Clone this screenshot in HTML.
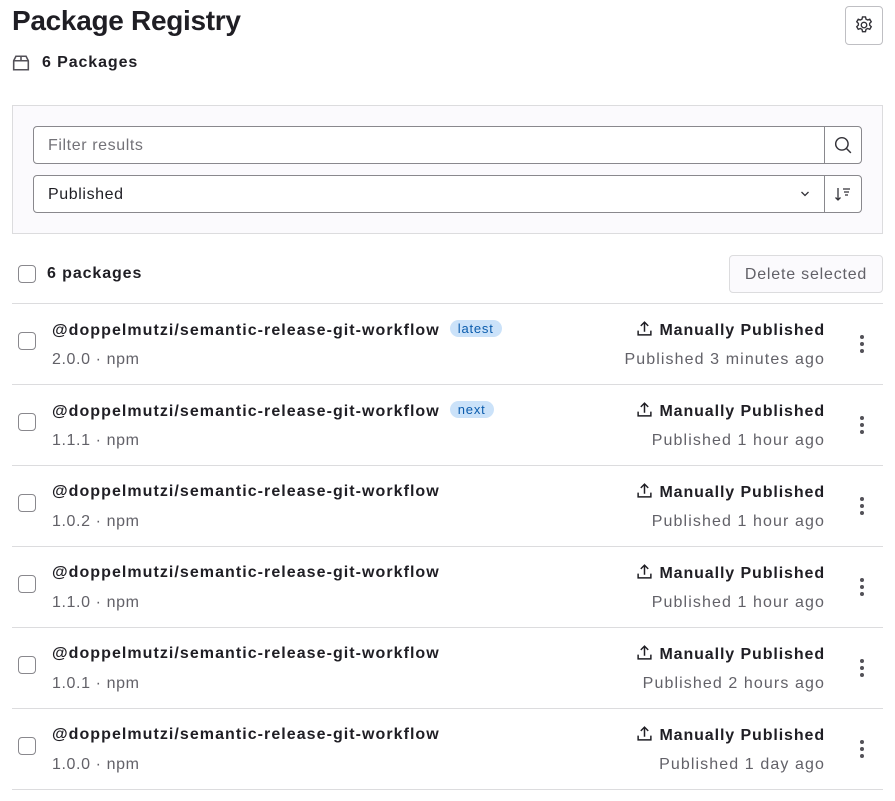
<!DOCTYPE html><html><head><style>
body{margin:0;background:#fff;font-family:"Liberation Sans",sans-serif;color:#1f1e24;width:895px;height:801px;overflow:hidden;position:relative}
.a{position:absolute}
h1{position:absolute;left:12px;top:5px;margin:0;font-size:28px;font-weight:bold;letter-spacing:-0.3px}
.cb{position:absolute;width:16px;height:16px;border:1px solid #89888d;border-radius:4px;background:#fff}
.row{position:absolute;left:12px;width:871px;height:80px;border-top:1px solid #dcdcde}
.nm{position:absolute;left:40px;top:16px;font-size:16px;line-height:20px;font-weight:bold;letter-spacing:1.05px;white-space:nowrap}
.sub{position:absolute;left:40px;top:46px;font-size:16px;line-height:20px;color:#626168;letter-spacing:0.6px}
.badge{display:inline-block;margin-left:10px;background:#cbe2f9;color:#0b5cad;font-weight:normal;font-size:13px;line-height:17px;padding:0 8px;border-radius:10px;vertical-align:2px;letter-spacing:0.8px}
.mp{position:absolute;right:58px;top:16px;font-size:16px;line-height:20px;font-weight:bold;letter-spacing:0.9px;white-space:nowrap}
.mp svg{vertical-align:-2px;margin-right:6px}
.pt{position:absolute;right:58px;top:46px;font-size:16px;line-height:20px;color:#626168;letter-spacing:1.1px;white-space:nowrap}
.dots{position:absolute;right:19px;top:31px;width:4px}
.dots i{display:block;width:4px;height:4px;border-radius:2px;background:#535158;margin-bottom:3px}
</style></head><body>
<h1>Package Registry</h1>
<svg class="a" style="left:12px;top:54px" width="18" height="18" viewBox="0 0 16 16" fill="none" stroke="#535158" stroke-width="1.4"><path d="M1.5 6l2-4h9l2 4v8h-13z M1.5 6h13 M8 2v4"/></svg>
<div class="a" style="left:42px;top:54px;font-size:16px;font-weight:bold;letter-spacing:0.9px">6 Packages</div>
<div class="a" style="left:845px;top:6px;width:38px;height:39px;border:1px solid #bfbfc3;border-radius:4px;box-sizing:border-box">
<svg style="position:absolute;left:8px;top:8px" width="20" height="20" viewBox="0 0 16 16" fill="none" stroke="#333238" stroke-width="1.1"><circle cx="8" cy="8" r="2.2"/><path d="M6.8 1.5h2.4l.4 1.8 1.3.7 1.7-.6 1.2 2-1.3 1.3v1.4l1.3 1.3-1.2 2-1.7-.6-1.3.7-.4 1.8H6.8l-.4-1.8-1.3-.7-1.7.6-1.2-2 1.3-1.3V6.7L2.2 5.4l1.2-2 1.7.6 1.3-.7z"/></svg></div>
<div class="a" style="left:12px;top:105px;width:871px;height:129px;background:#fbfafd;border:1px solid #dcdcde;box-sizing:border-box"></div>
<div class="a" style="left:33px;top:126px;width:829px;height:38px;background:#fff;border:1px solid #89888d;border-radius:4px;box-sizing:border-box"></div>
<div class="a" style="left:824px;top:126px;width:1px;height:38px;background:#89888d"></div>
<div class="a" style="left:48px;top:137px;font-size:16px;color:#737278;letter-spacing:0.6px">Filter results</div>
<svg class="a" style="left:834px;top:136px" width="18" height="18" viewBox="0 0 16 16" fill="none" stroke="#333238" stroke-width="1.3"><circle cx="7" cy="7" r="5.5"/><path d="M11 11l4 4"/></svg>
<div class="a" style="left:33px;top:175px;width:829px;height:38px;background:#fff;border:1px solid #89888d;border-radius:4px;box-sizing:border-box"></div>
<div class="a" style="left:824px;top:175px;width:1px;height:38px;background:#89888d"></div>
<div class="a" style="left:48px;top:186px;font-size:16px;letter-spacing:0.6px">Published</div>
<svg class="a" style="left:799px;top:189px" width="12" height="10" viewBox="0 0 12 10" fill="none" stroke="#333238" stroke-width="1.3"><path d="M2.5 3l3.5 3.5 3.5-3.5"/></svg>
<svg class="a" style="left:834px;top:185px" width="18" height="18" viewBox="0 0 18 18" fill="none" stroke="#333238" stroke-width="1.3"><path d="M4 3v12M1.5 12.5L4 15l2.5-2.5M9 4h7M10 7h5M11 10h3"/></svg>
<div class="cb" style="left:18px;top:265px"></div>
<div class="a" style="left:47px;top:265px;font-size:16px;font-weight:bold;letter-spacing:0.9px">6 packages</div>
<div class="a" style="left:729px;top:255px;width:154px;height:38px;background:#fbfafd;border:1px solid #dcdcde;border-radius:4px;box-sizing:border-box;color:#626168;font-size:16px;text-align:center;line-height:38px;letter-spacing:0.8px">Delete selected</div>

<svg width="0" height="0" style="position:absolute"><defs><symbol id="up" viewBox="0 0 16 16"><path d="M8 11V2M4.5 5.5L8 2l3.5 3.5M2 10v4h12v-4" fill="none" stroke="#1f1e24" stroke-width="1.4"/></symbol></defs></svg>

<div class="row" style="top:303px"><div class="cb" style="left:6px;top:28px"></div><div class="nm">@doppelmutzi/semantic-release-git-workflow<span class="badge">latest</span></div><div class="sub">2.0.0 · npm</div><div class="mp"><svg width="17" height="17"><use href="#up"/></svg>Manually Published</div><div class="pt">Published 3 minutes ago</div><div class="dots"><i></i><i></i><i></i></div></div>
<div class="row" style="top:384px"><div class="cb" style="left:6px;top:28px"></div><div class="nm">@doppelmutzi/semantic-release-git-workflow<span class="badge">next</span></div><div class="sub">1.1.1 · npm</div><div class="mp"><svg width="17" height="17"><use href="#up"/></svg>Manually Published</div><div class="pt">Published 1 hour ago</div><div class="dots"><i></i><i></i><i></i></div></div>
<div class="row" style="top:465px"><div class="cb" style="left:6px;top:28px"></div><div class="nm">@doppelmutzi/semantic-release-git-workflow</div><div class="sub">1.0.2 · npm</div><div class="mp"><svg width="17" height="17"><use href="#up"/></svg>Manually Published</div><div class="pt">Published 1 hour ago</div><div class="dots"><i></i><i></i><i></i></div></div>
<div class="row" style="top:546px"><div class="cb" style="left:6px;top:28px"></div><div class="nm">@doppelmutzi/semantic-release-git-workflow</div><div class="sub">1.1.0 · npm</div><div class="mp"><svg width="17" height="17"><use href="#up"/></svg>Manually Published</div><div class="pt">Published 1 hour ago</div><div class="dots"><i></i><i></i><i></i></div></div>
<div class="row" style="top:627px"><div class="cb" style="left:6px;top:28px"></div><div class="nm">@doppelmutzi/semantic-release-git-workflow</div><div class="sub">1.0.1 · npm</div><div class="mp"><svg width="17" height="17"><use href="#up"/></svg>Manually Published</div><div class="pt">Published 2 hours ago</div><div class="dots"><i></i><i></i><i></i></div></div>
<div class="row" style="top:708px;border-bottom:1px solid #dcdcde"><div class="cb" style="left:6px;top:28px"></div><div class="nm">@doppelmutzi/semantic-release-git-workflow</div><div class="sub">1.0.0 · npm</div><div class="mp"><svg width="17" height="17"><use href="#up"/></svg>Manually Published</div><div class="pt">Published 1 day ago</div><div class="dots"><i></i><i></i><i></i></div></div>
</body></html>
